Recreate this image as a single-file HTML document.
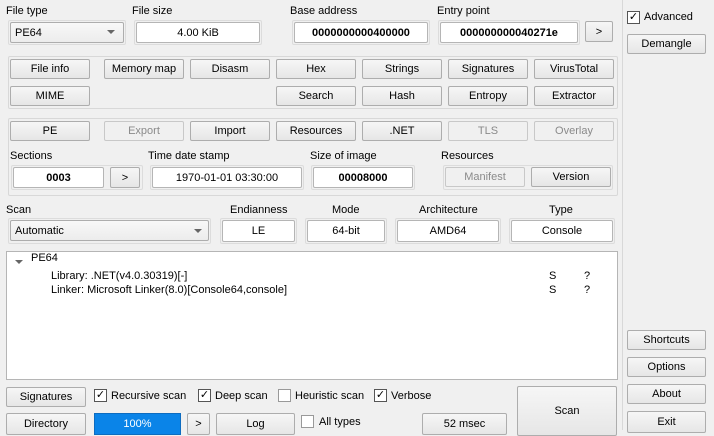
<!DOCTYPE html>
<html><head><meta charset="utf-8"><style>
*{box-sizing:border-box;margin:0;padding:0}
body{width:714px;height:430px;background:#f0f0f0;font-family:"Liberation Sans","DejaVu Sans",sans-serif;font-size:11px;color:#000;position:relative;overflow:hidden}
.a{position:absolute}
.l{position:absolute;white-space:nowrap}
.b{position:absolute;background:linear-gradient(#f6f6f6,#e6e6e6);border:1px solid #adadad;border-radius:2px;display:flex;align-items:center;justify-content:center;white-space:nowrap}
.d{color:#8a8a8a;border-color:#c8c8c8;background:#f0f0f0}
.e{position:absolute;background:#fff;border:1px solid #b5b5b5;border-radius:2px;display:flex;align-items:center;justify-content:center;white-space:nowrap}
.f{position:absolute;border:1px solid #dcdcdc;border-radius:2px}
.bold{font-weight:bold}
.cb{position:absolute;width:13px;height:13px;border:1px solid #555;background:#fff;font-size:11px;line-height:11px;text-align:center;font-weight:bold}
.g{position:absolute;border:1px solid #d8d8d8;border-radius:2px}
</style></head><body>
<div class="l" style="left:6px;top:5px">File type</div>
<div class="l" style="left:132px;top:5px">File size</div>
<div class="l" style="left:290px;top:5px">Base address</div>
<div class="l" style="left:437px;top:5px">Entry point</div>
<div class="f" style="left:8px;top:20px;width:118px;height:25px"></div>
<div class="e" style="left:10px;top:22px;width:114px;height:21px;justify-content:flex-start;padding-left:4px;border-color:#adadad;background:linear-gradient(#f8f8f8,#ececec)">PE64</div>
<div class="a" style="left:107px;top:30px;border-left:4px solid transparent;border-right:4px solid transparent;border-top:4px solid #666"></div>
<div class="f" style="left:134px;top:20px;width:128px;height:25px"></div>
<div class="e" style="left:136px;top:22px;width:124px;height:21px">4.00 KiB</div>
<div class="f" style="left:292px;top:20px;width:138px;height:25px"></div>
<div class="e bold" style="left:294px;top:22px;width:134px;height:21px">0000000000400000</div>
<div class="f" style="left:438px;top:20px;width:142px;height:25px"></div>
<div class="e bold" style="left:440px;top:22px;width:138px;height:21px">000000000040271e</div>
<div class="b" style="left:585px;top:21px;width:28px;height:21px">&gt;</div>

<div class="g" style="left:8px;top:56px;width:610px;height:53px"></div>
<div class="b" style="left:10px;top:59px;width:80px;height:20px">File info</div>
<div class="b" style="left:104px;top:59px;width:80px;height:20px">Memory map</div>
<div class="b" style="left:190px;top:59px;width:80px;height:20px">Disasm</div>
<div class="b" style="left:276px;top:59px;width:80px;height:20px">Hex</div>
<div class="b" style="left:362px;top:59px;width:80px;height:20px">Strings</div>
<div class="b" style="left:448px;top:59px;width:80px;height:20px">Signatures</div>
<div class="b" style="left:534px;top:59px;width:80px;height:20px">VirusTotal</div>
<div class="b" style="left:10px;top:86px;width:80px;height:20px">MIME</div>
<div class="b" style="left:276px;top:86px;width:80px;height:20px">Search</div>
<div class="b" style="left:362px;top:86px;width:80px;height:20px">Hash</div>
<div class="b" style="left:448px;top:86px;width:80px;height:20px">Entropy</div>
<div class="b" style="left:534px;top:86px;width:80px;height:20px">Extractor</div>

<div class="g" style="left:8px;top:118px;width:610px;height:78px"></div>
<div class="b" style="left:10px;top:121px;width:80px;height:20px">PE</div>
<div class="b d" style="left:104px;top:121px;width:80px;height:20px">Export</div>
<div class="b" style="left:190px;top:121px;width:80px;height:20px">Import</div>
<div class="b" style="left:276px;top:121px;width:80px;height:20px">Resources</div>
<div class="b" style="left:362px;top:121px;width:80px;height:20px">.NET</div>
<div class="b d" style="left:448px;top:121px;width:80px;height:20px">TLS</div>
<div class="b d" style="left:534px;top:121px;width:80px;height:20px">Overlay</div>
<div class="l" style="left:10px;top:150px">Sections</div>
<div class="l" style="left:148px;top:150px">Time date stamp</div>
<div class="l" style="left:310px;top:150px">Size of image</div>
<div class="l" style="left:441px;top:150px">Resources</div>
<div class="f" style="left:11px;top:165px;width:132px;height:25px"></div>
<div class="e bold" style="left:13px;top:167px;width:91px;height:21px">0003</div>
<div class="b" style="left:110px;top:167px;width:30px;height:21px">&gt;</div>
<div class="f" style="left:150px;top:165px;width:154px;height:25px"></div>
<div class="e" style="left:152px;top:167px;width:150px;height:21px">1970-01-01 03:30:00</div>
<div class="f" style="left:311px;top:165px;width:104px;height:25px"></div>
<div class="e bold" style="left:313px;top:167px;width:100px;height:21px">00008000</div>
<div class="f" style="left:443px;top:165px;width:170px;height:25px"></div>
<div class="b d" style="left:445px;top:167px;width:80px;height:20px">Manifest</div>
<div class="b" style="left:531px;top:167px;width:80px;height:20px">Version</div>

<div class="l" style="left:6px;top:204px">Scan</div>
<div class="l" style="left:230px;top:204px">Endianness</div>
<div class="l" style="left:332px;top:204px">Mode</div>
<div class="l" style="left:419px;top:204px">Architecture</div>
<div class="l" style="left:549px;top:204px">Type</div>
<div class="f" style="left:8px;top:218px;width:203px;height:26px"></div>
<div class="e" style="left:10px;top:220px;width:199px;height:21px;justify-content:flex-start;padding-left:4px;border-color:#adadad;background:linear-gradient(#f8f8f8,#ececec)">Automatic</div>
<div class="a" style="left:194px;top:229px;border-left:4px solid transparent;border-right:4px solid transparent;border-top:4px solid #666"></div>
<div class="f" style="left:220px;top:218px;width:77px;height:26px"></div>
<div class="e" style="left:222px;top:220px;width:73px;height:22px">LE</div>
<div class="f" style="left:305px;top:218px;width:82px;height:26px"></div>
<div class="e" style="left:307px;top:220px;width:78px;height:22px">64-bit</div>
<div class="f" style="left:395px;top:218px;width:106px;height:26px"></div>
<div class="e" style="left:397px;top:220px;width:102px;height:22px">AMD64</div>
<div class="f" style="left:509px;top:218px;width:106px;height:26px"></div>
<div class="e" style="left:511px;top:220px;width:102px;height:22px">Console</div>

<div class="a" style="left:6px;top:251px;width:612px;height:129px;background:#fff;border:1px solid #b5b5b5"></div>
<div class="a" style="left:15px;top:260px;border-left:4px solid transparent;border-right:4px solid transparent;border-top:4px solid #666"></div>
<div class="l" style="left:31px;top:252px">PE64</div>
<div class="l" style="left:51px;top:270px">Library: .NET(v4.0.30319)[-]</div>
<div class="l" style="left:51px;top:284px">Linker: Microsoft Linker(8.0)[Console64,console]</div>
<div class="l" style="left:549px;top:270px">S</div><div class="l" style="left:584px;top:270px">?</div>
<div class="l" style="left:549px;top:284px">S</div><div class="l" style="left:584px;top:284px">?</div>

<div class="b" style="left:6px;top:387px;width:80px;height:20px">Signatures</div>
<div class="cb" style="left:94px;top:389px">✓</div><div class="l" style="left:111px;top:390px">Recursive scan</div>
<div class="cb" style="left:198px;top:389px">✓</div><div class="l" style="left:215px;top:390px">Deep scan</div>
<div class="cb" style="left:278px;top:389px;border-color:#999"></div><div class="l" style="left:295px;top:390px">Heuristic scan</div>
<div class="cb" style="left:374px;top:389px">✓</div><div class="l" style="left:391px;top:390px">Verbose</div>
<div class="b" style="left:517px;top:386px;width:100px;height:50px">Scan</div>
<div class="b" style="left:6px;top:413px;width:80px;height:22px">Directory</div>
<div class="a" style="left:94px;top:413px;width:87px;height:22px;background:#0a84e8;border:1px solid #0d6cc0;color:#fff;display:flex;align-items:center;justify-content:center">100%</div>
<div class="b" style="left:187px;top:413px;width:23px;height:22px">&gt;</div>
<div class="b" style="left:216px;top:413px;width:79px;height:22px">Log</div>
<div class="cb" style="left:301px;top:415px;border-color:#999"></div><div class="l" style="left:319px;top:416px">All types</div>
<div class="b" style="left:422px;top:413px;width:85px;height:22px">52 msec</div>

<div class="a" style="left:622px;top:0;width:1px;height:430px;background:#d8d8d8"></div>
<div class="cb" style="left:627px;top:11px">✓</div><div class="l" style="left:644px;top:11px">Advanced</div>
<div class="b" style="left:627px;top:34px;width:79px;height:20px">Demangle</div>
<div class="b" style="left:627px;top:330px;width:79px;height:20px">Shortcuts</div>
<div class="b" style="left:627px;top:357px;width:79px;height:20px">Options</div>
<div class="b" style="left:627px;top:384px;width:79px;height:20px">About</div>
<div class="b" style="left:627px;top:411px;width:79px;height:22px">Exit</div>
</body></html>
